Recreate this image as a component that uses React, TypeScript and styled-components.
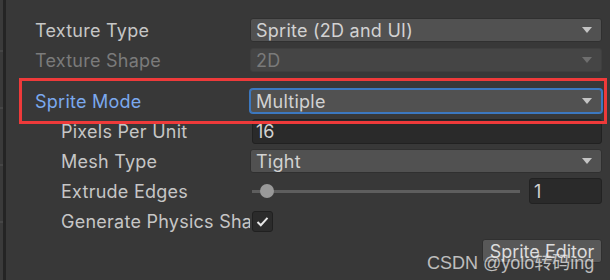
import React from "react";
import styled, { createGlobalStyle } from "styled-components";

const Global = createGlobalStyle`
  html, body { margin: 0; padding: 0; background: #383838; }
  body { font-family: Inter, "Noto Sans", "Liberation Sans", sans-serif; }
  #root { width: 610px; height: 280px; overflow: hidden; }
`;

const Page = styled.div`
  position: relative;
  display: flex;
  width: 610px;
  height: 280px;
  background: #383838;
  overflow: hidden;
`;

const SideStrip = styled.div`
  width: 3px;
  flex: 0 0 3px;
  background:
    repeating-linear-gradient(
      to bottom,
      #3a3a3a 0px,
      #3a3a3a 55px,
      #464646 55px,
      #464646 57px
    );
  background-position: 0 -5px;
`;

const SideBorder = styled.div`
  width: 3px;
  flex: 0 0 3px;
  background: #242424;
`;

const Content = styled.div`
  flex: 1;
  display: flex;
  flex-direction: column;
  padding: 15px 8px 0 29px;
`;

const Row = styled.div<{ $gapTop?: number }>`
  display: grid;
  grid-template-columns: 215px 1fr;
  align-items: center;
  height: 30px;
  margin-top: ${(p) => p.$gapTop ?? 0}px;
`;

const Label = styled.div<{ $indent?: boolean; $tone?: "normal" | "dim" | "blue" }>`
  padding-left: ${(p) => (p.$indent ? 26 : 0)}px;
  font-size: 18px;
  letter-spacing: 0.25px;
  white-space: nowrap;
  overflow: hidden;
  color: ${(p) =>
    p.$tone === "dim" ? "#7b7b7b" : p.$tone === "blue" ? "#7ba9ee" : "#c6c6c6"};
`;

const Dropdown = styled.div<{ $disabled?: boolean; $focused?: boolean }>`
  height: 24px;
  box-sizing: border-box;
  display: flex;
  align-items: center;
  justify-content: space-between;
  padding: 0 9px 0 5px;
  border-radius: 3px;
  background: ${(p) => (p.$disabled ? "#454545" : "#515151")};
  border: 1px solid ${(p) => (p.$focused ? "#3c78c0" : p.$disabled ? "#3f3f3f" : "#303030")};
  box-shadow: ${(p) => (p.$focused ? "0 0 0 1px #3c78c0" : "none")};
  color: ${(p) => (p.$disabled ? "#7a7a7a" : "#d2d2d2")};
  font-size: 18px;
  letter-spacing: 0.25px;
`;

const Arrow = styled.span<{ $disabled?: boolean }>`
  width: 0;
  height: 0;
  border-left: 5px solid transparent;
  border-right: 5px solid transparent;
  border-top: 6px solid ${(p) => (p.$disabled ? "#6e6e6e" : "#c4c4c4")};
`;

const TextField = styled.div`
  height: 25px;
  box-sizing: border-box;
  display: flex;
  align-items: center;
  padding: 0 3px;
  margin-left: 2px;
  border-radius: 3px;
  background: #2a2a2a;
  border: 1px solid #212121;
  color: #d2d2d2;
  font-size: 18px;
`;

const SliderRow = styled.div`
  display: flex;
  align-items: center;
  gap: 9px;
  padding-left: 2px;
`;

const Track = styled.div`
  position: relative;
  flex: 1;
  height: 3px;
  background: #5e5e5e;
  display: flex;
  align-items: center;
`;

const Thumb = styled.div`
  position: absolute;
  left: 8px;
  width: 14px;
  height: 14px;
  border-radius: 50%;
  background: #999999;
`;

const NumberField = styled.div`
  width: 73px;
  height: 26px;
  box-sizing: border-box;
  display: flex;
  align-items: center;
  padding: 0 4px;
  border-radius: 3px;
  background: #2a2a2a;
  border: 1px solid #222222;
  color: #d2d2d2;
  font-size: 18px;
`;

const Checkbox = styled.div`
  margin-left: 2px;
  width: 21px;
  height: 21px;
  box-sizing: border-box;
  border-radius: 3px;
  background: #2b2b2b;
  border: 1px solid #202020;
  display: flex;
  align-items: center;
  justify-content: center;
`;

const ButtonRow = styled.div`
  display: flex;
  justify-content: flex-end;
  align-items: center;
  height: 30px;
`;

const Button = styled.div`
  width: 120px;
  height: 24px;
  box-sizing: border-box;
  display: flex;
  align-items: center;
  justify-content: center;
  border-radius: 3px;
  background: #585858;
  border: 1px solid #303030;
  color: #dcdcdc;
  font-size: 18px;
`;

const Annotation = styled.div`
  position: absolute;
  left: 19px;
  top: 78px;
  width: 588px;
  height: 46px;
  box-sizing: border-box;
  border: 3px solid #ee3a3a;
  pointer-events: none;
`;

const Watermark = styled.div`
  position: absolute;
  left: 427px;
  top: 248px;
  font-family: "Liberation Sans", "Noto Sans CJK SC", sans-serif;
  font-size: 18px;
  color: rgba(235, 235, 235, 0.75);
  white-space: nowrap;
  pointer-events: none;
`;

export default function App() {
  return (
    <Page>
      <Global />
      <SideStrip />
      <SideBorder />
      <Content>
        <Row>
          <Label>Texture Type</Label>
          <Dropdown>
            <span>Sprite (2D and UI)</span>
            <Arrow />
          </Dropdown>
        </Row>
        <Row>
          <Label $tone="dim">Texture Shape</Label>
          <Dropdown $disabled>
            <span>2D</span>
            <Arrow $disabled />
          </Dropdown>
        </Row>
        <Row $gapTop={11}>
          <Label $tone="blue">Sprite Mode</Label>
          <Dropdown $focused>
            <span>Multiple</span>
            <Arrow />
          </Dropdown>
        </Row>
        <Row>
          <Label $indent>Pixels Per Unit</Label>
          <TextField>16</TextField>
        </Row>
        <Row>
          <Label $indent>Mesh Type</Label>
          <Dropdown>
            <span>Tight</span>
            <Arrow />
          </Dropdown>
        </Row>
        <Row>
          <Label $indent>Extrude Edges</Label>
          <SliderRow>
            <Track>
              <Thumb />
            </Track>
            <NumberField>1</NumberField>
          </SliderRow>
        </Row>
        <Row>
          <Label $indent>Generate Physics Shape</Label>
          <div>
            <Checkbox>
              <svg width="13" height="11" viewBox="0 0 13 11">
                <path d="M1.5 6 L4.8 9.2 L11.5 1.8" fill="none" stroke="#e6e6e6" strokeWidth="2" />
              </svg>
            </Checkbox>
          </div>
        </Row>
        <ButtonRow>
          <Button>Sprite Editor</Button>
        </ButtonRow>
      </Content>
      <Annotation />
      <Watermark>CSDN @yolo转码ing</Watermark>
    </Page>
  );
}
